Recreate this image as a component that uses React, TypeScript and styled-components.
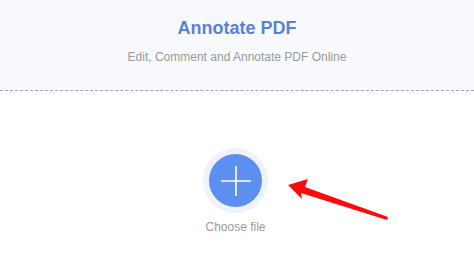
import React from "react";
import styled, { createGlobalStyle } from "styled-components";

const Global = createGlobalStyle`
  html, body { margin: 0; padding: 0; background: #ffffff; }
  body { font-family: "Liberation Sans", Arial, sans-serif; }
`;

const Page = styled.div`
  position: relative;
  width: 474px;
  height: 264px;
  overflow: hidden;
  background: #ffffff;
`;

const Header = styled.header`
  height: 91px;
  box-sizing: border-box;
  padding-top: 18px;
  background: #f8f9fd;
  border-bottom: 1px dashed #9ea3b4;
  display: flex;
  flex-direction: column;
  align-items: center;
`;

const Title = styled.h1`
  margin: 0;
  font-size: 18px;
  line-height: 20px;
  font-weight: 700;
  color: #5b80d5;
`;

const Subtitle = styled.p`
  margin: 12px 0 0;
  font-size: 12px;
  line-height: 14px;
  color: #9a9a9a;
`;

const Main = styled.main`
  display: flex;
  flex-direction: column;
  align-items: center;
  padding: 57px 3px 0 0;
`;

const Ring = styled.div`
  width: 65px;
  height: 65px;
  box-sizing: border-box;
  padding: 6px;
  border-radius: 50%;
  background: #eef2fb;
`;

const AddButton = styled.button`
  width: 53px;
  height: 53px;
  border: 0;
  padding: 0;
  border-radius: 50%;
  background: #5d8ff0;
  display: flex;
  align-items: center;
  justify-content: center;
  cursor: pointer;
`;

const Label = styled.span`
  margin-top: 7px;
  font-size: 12px;
  line-height: 14px;
  color: #9a9a9a;
`;

const Arrow = styled.svg`
  position: absolute;
  left: 0;
  top: 0;
  pointer-events: none;
`;

export default function App() {
  return (
    <Page>
      <Global />
      <Header>
        <Title>Annotate PDF</Title>
        <Subtitle>Edit, Comment and Annotate PDF Online</Subtitle>
      </Header>
      <Main>
        <Ring>
          <AddButton aria-label="Choose file">
            <svg width="30" height="30" viewBox="0 0 30 30">
              <path d="M15 0V30M0 15H30" stroke="#ffffff" strokeWidth="1.6" />
            </svg>
          </AddButton>
        </Ring>
        <Label>Choose file</Label>
      </Main>
      <Arrow width="474" height="264" viewBox="0 0 474 264">
        <polygon
          points="288,185 308,179 305,187 388,217 387,220 301,193 302,199"
          fill="#ff0a0a"
        />
      </Arrow>
    </Page>
  );
}
